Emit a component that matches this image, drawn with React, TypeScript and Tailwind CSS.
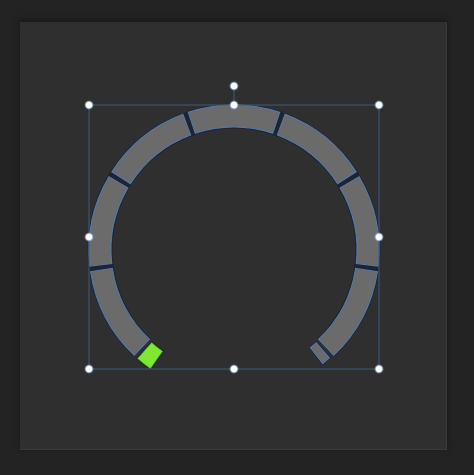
import React from "react";

const CX = 234;
const CY = 250;

function pt(r: number, a: number) {
  const t = (a * Math.PI) / 180;
  return [CX + r * Math.cos(t), CY + r * Math.sin(t)];
}

function sector(a1: number, a2: number, R: number, r: number) {
  const [x1, y1] = pt(R, a1);
  const [x2, y2] = pt(R, a2);
  const [x3, y3] = pt(r, a2);
  const [x4, y4] = pt(r, a1);
  const large = a2 - a1 > 180 ? 1 : 0;
  return `M${x1.toFixed(2)} ${y1.toFixed(2)} A${R} ${R} 0 ${large} 1 ${x2.toFixed(2)} ${y2.toFixed(2)} L${x3.toFixed(2)} ${y3.toFixed(2)} A${r} ${r} 0 ${large} 0 ${x4.toFixed(2)} ${y4.toFixed(2)} Z`;
}

const bounds = [133.5, 172.5, 211.5, 250.5, 289.5, 328.5, 367.5, 406.5];
const R = 145;
const r = 123;

export default function App() {
  const segs: [number, number][] = [];
  for (let i = 0; i < bounds.length - 1; i++) {
    segs.push([bounds[i] + (i === 0 ? 0 : 1.15), bounds[i + 1] - (i === bounds.length - 2 ? 0 : 1.15)]);
  }
  const handles: [number, number][] = [
    [89, 105], [234, 105], [379, 105],
    [89, 237], [379, 237],
    [89, 369], [234, 369], [379, 369],
    [234, 86],
  ];
  return (
    <div className="w-[474px] h-[475px] bg-[#232323] pt-[22px] pl-[20px]">
      <div className="w-[427px] h-[428px] bg-[#2f2f2f] border-r border-b border-[#3a3a3a] shadow-[0_-2px_6px_rgba(0,0,0,0.35)]">
        <svg width="427" height="428" viewBox="20 22 427 428">
          <defs>
            <radialGradient id="hg">
              <stop offset="0%" stopColor="#ffffff" />
              <stop offset="55%" stopColor="#ffffff" />
              <stop offset="75%" stopColor="#b8d4ff" stopOpacity="0.6" />
              <stop offset="100%" stopColor="#8fb4ff" stopOpacity="0" />
            </radialGradient>
          </defs>
          <path d={sector(133.5, 406.5, R + 1.5, r - 1.5)} fill="#1f252e" />
          {segs.map(([a, b], i) => (
            <path key={i} d={sector(a, b, R, r)} fill="#6b6b6b" stroke="#5677a8" strokeWidth="1.1" />
          ))}
          <path d={sector(48.5, 52, 144, 124)} fill="#1f252e" stroke="#1f252e" strokeWidth="2.5" />
          <path d={sector(48.5, 52, 144, 124)} fill="#6b6b6b" stroke="#5677a8" strokeWidth="1.1" />
          <path d={sector(125.2, 131.6, 145, 124)} fill="#1f2a1a" stroke="#1f252e" strokeWidth="2.5" />
          <path d={sector(125.2, 131.6, 145, 124)} fill="#7ee832" stroke="#5fae2a" strokeWidth="0.8" />
          <rect x="89" y="105" width="290" height="264" fill="none" stroke="#3e5a80" strokeWidth="1" />
          <line x1="234" y1="86" x2="234" y2="105" stroke="#3e5a80" strokeWidth="1" />
          {handles.map(([x, y], i) => (
            <g key={i}>
              <circle cx={x} cy={y} r="5" fill="url(#hg)" />
              <circle cx={x} cy={y} r="2.8" fill="#ffffff" />
            </g>
          ))}
        </svg>
      </div>
    </div>
  );
}
